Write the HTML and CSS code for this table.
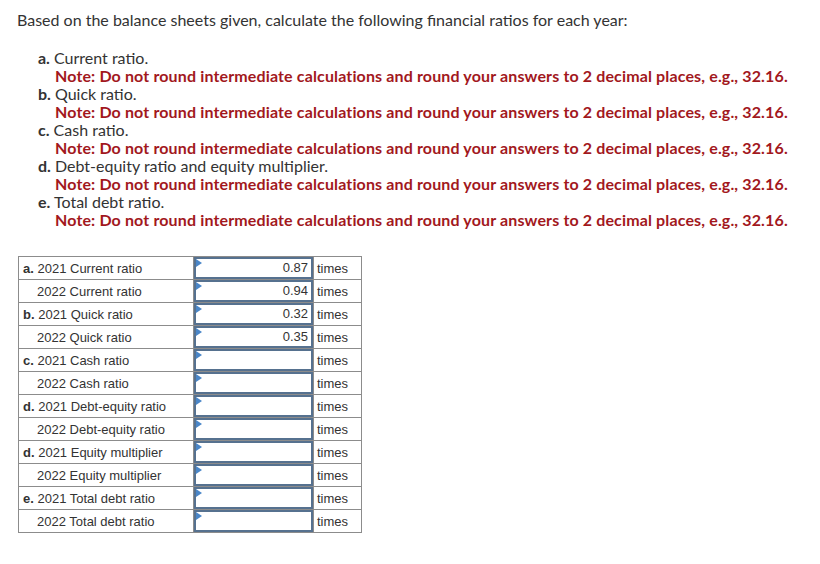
FILE: index.html
```html
<!DOCTYPE html>
<html>
<head>
<meta charset="utf-8">
<link rel="stylesheet" href="styles.css">
</head>
<body>
<div class="page">
  <p class="intro">Based on the balance sheets given, calculate the following financial ratios for each year:</p>
  <ol class="parts">
    <li><b class="lbl">a.</b> Current ratio.<br><span class="note">Note: Do not round intermediate calculations and round your answers to 2 decimal places, e.g., 32.16.</span></li>
    <li><b class="lbl">b.</b> Quick ratio.<br><span class="note">Note: Do not round intermediate calculations and round your answers to 2 decimal places, e.g., 32.16.</span></li>
    <li><b class="lbl">c.</b> Cash ratio.<br><span class="note">Note: Do not round intermediate calculations and round your answers to 2 decimal places, e.g., 32.16.</span></li>
    <li><b class="lbl">d.</b> Debt-equity ratio and equity multiplier.<br><span class="note">Note: Do not round intermediate calculations and round your answers to 2 decimal places, e.g., 32.16.</span></li>
    <li><b class="lbl">e.</b> Total debt ratio.<br><span class="note">Note: Do not round intermediate calculations and round your answers to 2 decimal places, e.g., 32.16.</span></li>
  </ol>
  <table class="answers">
    <tr><td class="label"><b>a.</b> 2021 Current ratio</td><td class="inp"><div class="box">0.87</div></td><td class="unit">times</td></tr>
    <tr><td class="label sub">2022 Current ratio</td><td class="inp"><div class="box">0.94</div></td><td class="unit">times</td></tr>
    <tr><td class="label"><b>b.</b> 2021 Quick ratio</td><td class="inp"><div class="box">0.32</div></td><td class="unit">times</td></tr>
    <tr><td class="label sub">2022 Quick ratio</td><td class="inp"><div class="box">0.35</div></td><td class="unit">times</td></tr>
    <tr><td class="label"><b>c.</b> 2021 Cash ratio</td><td class="inp"><div class="box"></div></td><td class="unit">times</td></tr>
    <tr><td class="label sub">2022 Cash ratio</td><td class="inp"><div class="box"></div></td><td class="unit">times</td></tr>
    <tr><td class="label"><b>d.</b> 2021 Debt-equity ratio</td><td class="inp"><div class="box"></div></td><td class="unit">times</td></tr>
    <tr><td class="label sub">2022 Debt-equity ratio</td><td class="inp"><div class="box"></div></td><td class="unit">times</td></tr>
    <tr><td class="label"><b>d.</b> 2021 Equity multiplier</td><td class="inp"><div class="box"></div></td><td class="unit">times</td></tr>
    <tr><td class="label sub">2022 Equity multiplier</td><td class="inp"><div class="box"></div></td><td class="unit">times</td></tr>
    <tr><td class="label"><b>e.</b> 2021 Total debt ratio</td><td class="inp"><div class="box"></div></td><td class="unit">times</td></tr>
    <tr><td class="label sub">2022 Total debt ratio</td><td class="inp"><div class="box"></div></td><td class="unit">times</td></tr>
  </table>
</div>
</body>
</html>
```
FILE: styles.css
```css
html, body {
  margin: 0;
  padding: 0;
  background: #ffffff;
}
.page {
  padding: 11px 0 0 17px;
  font-family: Lato, "Liberation Sans", sans-serif;
  color: #333333;
  font-size: 16px;
}
.intro {
  margin: 0;
  line-height: 18px;
}
.parts {
  list-style: none;
  margin: 20px 0 0 0;
  padding: 0 0 0 21px;
  line-height: 18px;
}
.parts li {
  padding-left: 17px;
  text-indent: -17px;
}
.lbl {
  font-weight: bold;
  color: #333333;
}
.note {
  display: inline-block;
  text-indent: 0;
  font-weight: bold;
  letter-spacing: 0.14px;
  color: #a2181d;
}
.answers {
  margin: 27px 0 0 1px;
  border-collapse: collapse;
  font-family: "Liberation Sans", Arial, sans-serif;
  font-size: 13px;
  color: #333333;
}
.answers td {
  border: 1px solid #8c8c8c;
  height: 22px;
  padding: 0;
  vertical-align: middle;
}
.label {
  width: 170px;
  padding-left: 4px !important;
}
.label.sub {
  padding-left: 18px !important;
  width: 156px;
}
.inp {
  width: 119px;
}
.box {
  position: relative;
  box-sizing: border-box;
  height: 22px;
  border: 2px solid #56718f;
  text-align: right;
  padding-right: 3px;
  line-height: 18px;
}
.box::before {
  content: "";
  position: absolute;
  left: 0;
  top: 0;
  border-top: 4px solid transparent;
  border-bottom: 4px solid transparent;
  border-left: 6px solid #4a86c8;
}
.unit {
  width: 44px;
  padding-left: 3px !important;
}
```
